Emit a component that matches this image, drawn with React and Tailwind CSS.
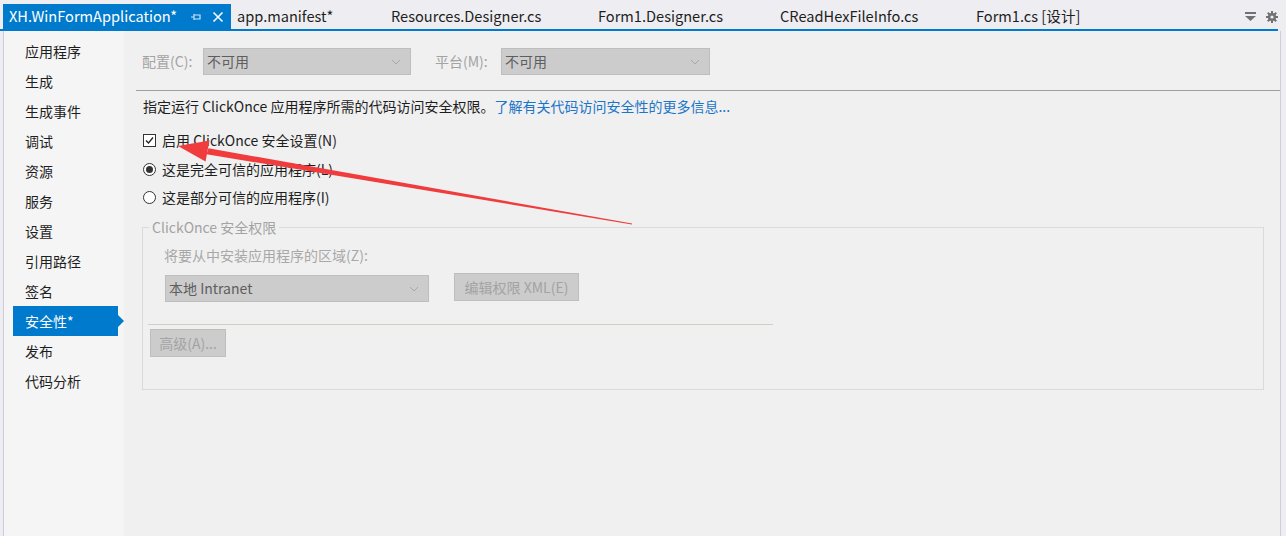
import React from 'react';

// Visual Studio project properties page - Security tab
const font = { fontFamily: '"Noto Sans CJK SC", "Noto Sans", sans-serif' };

const tabs = [
    { name: 'app.manifest*', w: 'w-[154px]' },
    { name: 'Resources.Designer.cs', w: 'w-[207px]' },
    { name: 'Form1.Designer.cs', w: 'w-[182px]' },
    { name: 'CReadHexFileInfo.cs', w: 'w-[196px]' },
    { name: 'Form1.cs [设计]', w: 'w-[200px]' },
];

const navItems = ['应用程序', '生成', '生成事件', '调试', '资源', '服务', '设置', '引用路径', '签名', '安全性*', '发布', '代码分析'];

const Chevron = () => (
    <svg width="10" height="6" viewBox="0 0 10 6" className="shrink-0">
        <path d="M1 1 L5 5 L9 1" fill="none" stroke="#a8a8a8" strokeWidth="1" />
    </svg>
);

const Combo = ({ value, className }) => (
    <div className={`flex items-center justify-between h-[27px] bg-[#cccccc] border border-[#bebebe] pl-[3px] pr-[9px] text-[14px] text-[#5e5e5e] ${className}`}>
        <span>{value}</span>
        <Chevron />
    </div>
);

const App = () => {
    return (
        <div className="relative w-[1286px] h-[536px] overflow-hidden bg-[#eeeef2] text-[14px]" style={font}>
            {/* Tab strip */}
            <div className="flex items-end h-[29px]">
                <div className="ml-[3px] flex items-center h-[25px] w-[228px] bg-[#007acc] text-white pl-[6px]">
                    <span className="text-[14.6px] leading-none">XH.WinFormApplication*</span>
                    <svg width="12" height="12" viewBox="0 0 12 12" className="ml-[13px]">
                        <path d="M1 6 H4 M4 3 V9 M4 4 H10 V8 H4" fill="none" stroke="#cfe3f5" strokeWidth="1.2" />
                    </svg>
                    <svg width="12" height="12" viewBox="0 0 12 12" className="ml-[10px]">
                        <path d="M1.5 1.5 L10.5 10.5 M10.5 1.5 L1.5 10.5" stroke="#ffffff" strokeWidth="1.6" />
                    </svg>
                </div>
                {tabs.map((t) => (
                    <div key={t.name} className={`flex items-center h-[25px] pl-[6px] ${t.w} text-[14.6px] leading-none text-[#1e1e1e]`}>
                        {t.name}
                    </div>
                ))}
                <div className="flex-1" />
                <div className="flex items-center gap-[10px] h-[25px] pr-[8px]">
                    <svg width="11" height="10" viewBox="0 0 11 10">
                        <rect x="0" y="0" width="11" height="2" fill="#717171" />
                        <path d="M0 4 H11 L5.5 9 Z" fill="#717171" />
                    </svg>
                    <svg width="12" height="12" viewBox="0 0 12 12">
                        <g fill="#717171">
                            <circle cx="6" cy="6" r="4" />
                            <rect x="5" y="0" width="2" height="12" />
                            <rect x="0" y="5" width="12" height="2" />
                            <rect x="5" y="0" width="2" height="12" transform="rotate(45 6 6)" />
                            <rect x="5" y="0" width="2" height="12" transform="rotate(-45 6 6)" />
                        </g>
                        <circle cx="6" cy="6" r="1.6" fill="#eeeef2" />
                    </svg>
                </div>
            </div>
            <div className="h-[2px] w-[1278px] bg-[#007acc]" />

            {/* Document body */}
            <div className="flex h-[505px] w-[1278px] ml-[3px] border-l border-[#cccedb] border-r">
                {/* Side nav */}
                <div className="w-[120px] bg-[#f5f5f5] pt-[5px] pl-[9px]">
                    {navItems.map((item) => {
                        const active = item === '安全性*';
                        return (
                            <div key={item} className="relative">
                                <div className={`h-[30px] w-[105px] flex items-center pl-[12px] text-[14px] ${active ? 'bg-[#007acc] text-white' : 'text-[#1e1e1e]'}`}>
                                    {item}
                                </div>
                                {active && (
                                    <div className="absolute left-[105px] top-[9px] w-0 h-0 border-y-[6px] border-y-transparent border-l-[6px] border-l-[#007acc]" />
                                )}
                            </div>
                        );
                    })}
                </div>

                {/* Main panel */}
                <div className="flex-1 bg-[#f0f0f0] pt-[17px]">
                    <div className="flex items-center pl-[18px]">
                        <span className="text-[#a3a3a3] w-[61px]">配置(C):</span>
                        <Combo value="不可用" className="w-[208px]" />
                        <span className="text-[#a3a3a3] ml-[24px] w-[66px]">平台(M):</span>
                        <Combo value="不可用" className="w-[209px]" />
                    </div>
                    <div className="ml-[12px] mt-[15px] h-px bg-[#a0a0a0]" />
                    <div className="pl-[19px] mt-[5px] leading-[20px] text-[#1e1e1e]">
                        指定运行 ClickOnce 应用程序所需的代码访问安全权限。<span className="text-[#1c75c8]">了解有关代码访问安全性的更多信息...</span>
                    </div>

                    <div className="pl-[19px] mt-[14px] flex items-center h-[20px] text-[#1e1e1e]">
                        <div className="w-[13px] h-[13px] border border-[#333333] bg-white flex items-center justify-center">
                            <svg width="9" height="9" viewBox="0 0 9 9">
                                <path d="M1 4.5 L3.5 7 L8 1.5" fill="none" stroke="#222" strokeWidth="1.3" />
                            </svg>
                        </div>
                        <span className="ml-[6px]">启用 ClickOnce 安全设置(N)</span>
                    </div>
                    <div className="pl-[19px] mt-[9px] flex items-center h-[20px] text-[#1e1e1e]">
                        <div className="w-[13px] h-[13px] rounded-full border border-[#333333] bg-white flex items-center justify-center">
                            <div className="w-[7px] h-[7px] rounded-full bg-[#333333]" />
                        </div>
                        <span className="ml-[6px]">这是完全可信的应用程序(L)</span>
                    </div>
                    <div className="pl-[19px] mt-[8px] flex items-center h-[20px] text-[#1e1e1e]">
                        <div className="w-[13px] h-[13px] rounded-full border border-[#333333] bg-white" />
                        <span className="ml-[6px]">这是部分可信的应用程序(I)</span>
                    </div>

                    <fieldset className="ml-[18px] mr-[16px] mt-[10px] h-[173px] border border-[#dadada] pl-[5px]">
                        <legend className="ml-[1px] px-[3px] text-[#a3a3a3] leading-[20px]">ClickOnce 安全权限</legend>
                        <div className="pl-[16px] mt-[8px] text-[#a8a8a8] leading-[20px]">将要从中安装应用程序的区域(Z):</div>
                        <div className="flex items-start pl-[17px] mt-[8px]">
                            <Combo value="本地 Intranet" className="w-[264px] mt-[2px]" />
                            <div className="ml-[25px] h-[28px] w-[125px] bg-[#cccccc] border border-[#bebebe] flex items-center justify-center text-[#a3a3a3]">
                                编辑权限 XML(E)
                            </div>
                        </div>
                        <div className="mt-[22px] w-[625px] h-px bg-[#cfcfc5]" />
                        <div className="ml-[2px] mt-[4px] h-[28px] w-[76px] bg-[#cccccc] border border-[#bebebe] flex items-center justify-center text-[#a3a3a3]">
                            高级(A)...
                        </div>
                    </fieldset>
                </div>
            </div>

            {/* Red annotation arrow */}
            <svg className="absolute left-0 top-0 pointer-events-none" width="1286" height="536">
                <polygon points="632.1,223.5 631.9,224.5 206.5,154.2 208.5,148.2" fill="#f03c3c" />
                <polygon points="178,146 209.5,140.5 205.5,161.5" fill="#f03c3c" />
            </svg>
        </div>
    );
};

export default App;
